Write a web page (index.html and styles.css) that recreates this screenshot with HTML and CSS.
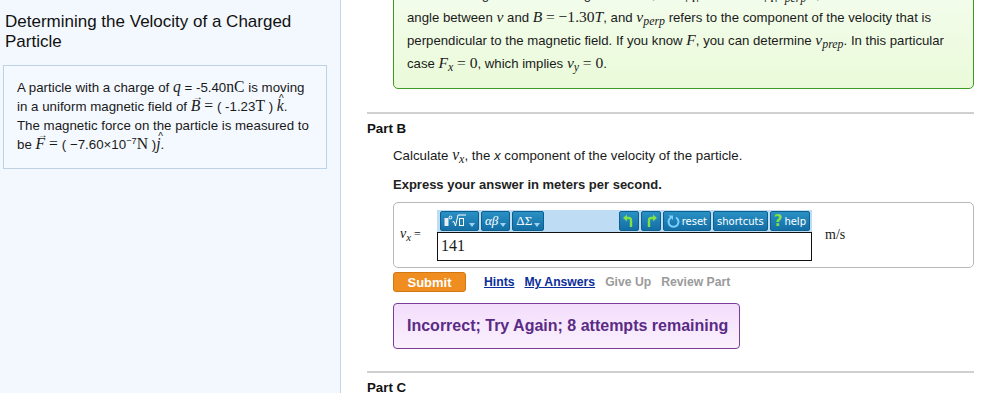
FILE: index.html
```html
<!DOCTYPE html>
<html lang="en">
<head>
    <meta charset="UTF-8">
    <title>Determining the Velocity of a Charged Particle</title>
    <link rel="stylesheet" href="styles.css">
</head>
<body>
    <div class="sidebar">
        <h1 class="problem-title">Determining the Velocity of a Charged Particle</h1>
        <div class="problem-text">
            A particle with a charge of <i class="m">q</i> = -5.40<span class="m">nC</span> is moving<br>
            in a uniform magnetic field of <span class="vec"><i class="m">B</i></span><span class="m"> = </span>( -1.23<span class="m">T</span> ) <span class="hat"><i class="m">k</i></span>.<br>
            The magnetic force on the particle is measured to<br>
            be <span class="vec"><i class="m">F</i></span><span class="m"> = </span>( &minus;7.60&times;10<sup>&minus;7</sup><span class="m">N</span> )<span class="hat"><i class="m">j</i></span>.
        </div>
    </div>

    <div class="main">
        <!-- hint from part A -->
        <div class="hint-box">
            <p>From the magnitude of the magnetic force, <i class="m">F</i> <span class="m">= |</span><i class="m">q</i><span class="m">|</span><i class="m">v</i><i class="m">B</i> sin <i class="m">&theta;</i> <span class="m">= |</span><i class="m">q</i><span class="m">|</span><i class="m">v</i><sub class="m-sub">perp</sub><i class="m">B</i>, where <i class="m">&theta;</i> is the</p>
            <p>angle between <i class="m">v</i> and <i class="m">B</i> <span class="m">= &minus;1.30</span><i class="m">T</i>, and <i class="m">v</i><sub class="m-sub">perp</sub> refers to the component of the velocity that is</p>
            <p>perpendicular to the magnetic field. If you know <i class="m">F</i>, you can determine <i class="m">v</i><sub class="m-sub">prep</sub>. In this particular</p>
            <p>case <i class="m">F</i><sub class="m-sub">x</sub> <span class="m">= 0</span>, which implies <i class="m">v</i><sub class="m-sub">y</sub> <span class="m">= 0</span>.</p>
        </div>

        <div class="part">
            <h2 class="part-title">Part B</h2>
            <div class="part-body">
                <p class="question">Calculate <i class="m">v</i><sub class="m-sub">x</sub>, the <i>x</i> component of the velocity of the particle.</p>
                <p class="units-note">Express your answer in meters per second.</p>

                <div class="answer-box">
                    <div class="answer-label"><i class="m">v</i><sub class="m-sub">x</sub> =</div>
                    <div class="editor">
                        <div class="toolbar">
                            <div class="tool-group">
                                <span class="tool">
                                    <svg width="23" height="14" viewBox="0 0 23 14">
                                        <rect x="0.5" y="4" width="4" height="8" fill="#e8eef4"/>
                                        <circle cx="6.5" cy="3.5" r="1.4" fill="none" stroke="#fff" stroke-width="1"/>
                                        <path d="M8.5 8 L10 7.5 L11.5 12 L14 1 L22 1" fill="none" stroke="#fff" stroke-width="1"/>
                                        <rect x="15.5" y="4.5" width="4" height="7" fill="none" stroke="#fff" stroke-width="1"/>
                                    </svg>
                                    <span class="caret"></span>
                                </span>
                                <span class="tool"><span class="greek">&alpha;&beta;</span><span class="caret"></span></span>
                                <span class="tool"><span class="greek up">&Delta;&Sigma;</span><span class="caret"></span></span>
                            </div>
                            <div class="tool-group">
                                <span class="tool icon">
                                    <svg width="14" height="14" viewBox="0 0 14 14">
                                        <path d="M9 13 L9 6 Q9 4 7 4 L4 4" fill="none" stroke="#7fe04a" stroke-width="2.4"/>
                                        <path d="M1 4 L5 0.5 L5 7.5 Z" fill="#7fe04a"/>
                                    </svg>
                                </span>
                                <span class="tool icon">
                                    <svg width="14" height="14" viewBox="0 0 14 14">
                                        <path d="M5 13 L5 6 Q5 4 7 4 L10 4" fill="none" stroke="#7fe04a" stroke-width="2.4"/>
                                        <path d="M13 4 L9 0.5 L9 7.5 Z" fill="#7fe04a"/>
                                    </svg>
                                </span>
                                <span class="tool">
                                    <svg width="13" height="14" viewBox="0 0 13 14">
                                        <path d="M4 3.5 A5 5 0 1 0 9 3.5" fill="none" stroke="#7fd0ff" stroke-width="2"/>
                                        <path d="M1.5 1.5 L6 1.5 L6 6 Z" fill="#7fd0ff"/>
                                    </svg>
                                    reset
                                </span>
                                <span class="tool">shortcuts</span>
                                <span class="tool"><span class="help-mark">?</span>help</span>
                            </div>
                        </div>
                        <div class="answer-input">141</div>
                    </div>
                    <div class="answer-units">m/s</div>
                </div>

                <div class="actions">
                    <button class="submit-btn">Submit</button>
                    <a class="action-link" href="#">Hints</a>
                    <a class="action-link" href="#">My Answers</a>
                    <span class="action-link off">Give Up</span>
                    <span class="action-link off">Review Part</span>
                </div>

                <div class="feedback">Incorrect; Try Again; 8 attempts remaining</div>
            </div>
        </div>

        <div class="part">
            <h2 class="part-title">Part C</h2>
        </div>
    </div>
</body>
</html>
```

FILE: styles.css
```css
* {
    margin: 0;
    padding: 0;
    box-sizing: border-box;
}

body {
    font-family: "Liberation Sans", Arial, sans-serif;
    color: #1a1a1a;
    background: #fff;
    display: flex;
    height: 393px;
    overflow: hidden;
}

.m {
    font-family: "Liberation Serif", "Times New Roman", serif;
    font-size: 1.18em;
    line-height: 0;
}

i.m {
    font-style: italic;
}

.m-sub {
    font-family: "Liberation Serif", "Times New Roman", serif;
    font-style: italic;
    font-size: 0.9em;
    vertical-align: -3px;
    line-height: 0;
}

sup {
    font-size: 0.7em;
    vertical-align: 5px;
    line-height: 0;
}

/* left column */
.sidebar {
    width: 341px;
    flex-shrink: 0;
    background: #f3f8fe;
    border-right: 1px solid #c2d4e6;
    padding: 12px 0 0 3px;
}

.problem-title {
    font-size: 17px;
    font-weight: normal;
    line-height: 20px;
    color: #111;
    padding-left: 2px;
    margin-bottom: 13px;
}

.problem-text {
    width: 324px;
    border: 1px solid #bfd2e4;
    background: #f4f9ff;
    padding: 12px 6px 14px 13px;
    font-size: 13.3px;
    line-height: 19px;
}

.vec, .hat {
    position: relative;
    display: inline-block;
    line-height: 0;
}

.vec::before, .hat::before {
    position: absolute;
    left: 2px;
    right: 0;
    text-align: center;
    font-size: 10px;
    line-height: 10px;
}

.vec::before {
    content: "\2192";
    top: -14px;
}

.hat::before {
    content: "^";
    top: -12px;
}

/* right column */
.main {
    width: 607px;
    margin-left: 26px;
}

.hint-box {
    margin: -26px 0 0 26px;
    border: 1px solid #3f9a22;
    border-radius: 5px;
    background: linear-gradient(#f5fdf0, #eafad9);
    padding: 8px 10px 13px 13px;
    font-size: 13.2px;
    line-height: 23px;
}

.part {
    border-top: 2px solid #d0d0d0;
    margin-top: 23px;
}

.part-title {
    font-size: 13.3px;
    font-weight: bold;
    line-height: 18px;
    margin-top: 6px;
    color: #111;
}

.part-body {
    padding-left: 26px;
}

.question {
    font-size: 13.3px;
    line-height: 18px;
    margin-top: 9px;
}

.units-note {
    font-size: 13px;
    font-weight: bold;
    line-height: 18px;
    margin-top: 11px;
    color: #222;
}

.answer-box {
    margin-top: 8px;
    height: 66px;
    border: 1px solid #b8b8b8;
    border-radius: 5px;
    display: flex;
    align-items: flex-start;
    padding: 7px 0 0 6px;
}

.answer-label {
    width: 37px;
    padding-top: 17px;
    font-family: "Liberation Serif", serif;
    font-size: 12px;
}

.answer-label i.m {
    font-size: 14px;
}

.editor {
    width: 375px;
}

.toolbar {
    height: 22px;
    background: #bfdcf5;
    display: flex;
    justify-content: space-between;
    align-items: center;
    padding: 0 2px 0 3px;
}

.tool-group {
    display: flex;
    gap: 2px;
}

.tool {
    height: 20px;
    display: flex;
    align-items: center;
    gap: 2px;
    padding: 0 3px;
    background: linear-gradient(#2a90c4, #136fa6);
    border: 1px solid #0d5f8e;
    border-radius: 2px;
    color: #fff;
    font-family: "DejaVu Sans", Verdana, sans-serif;
    font-size: 10px;
}

.tool.icon {
    padding: 0 2px;
}

.greek {
    font-family: "Liberation Serif", serif;
    font-style: italic;
    font-size: 13px;
}

.greek.up {
    font-style: normal;
}

.caret {
    width: 0;
    height: 0;
    border-left: 3px solid transparent;
    border-right: 3px solid transparent;
    border-top: 4px solid #9fd2f5;
    margin-top: 8px;
}

.help-mark {
    color: #7fe04a;
    font-size: 15px;
    font-weight: bold;
    font-family: "DejaVu Sans", sans-serif;
}

.answer-input {
    height: 29px;
    border: 1px solid #111;
    background: #fff;
    font-family: "Liberation Serif", serif;
    font-size: 16px;
    line-height: 25px;
    padding-left: 3px;
}

.answer-units {
    margin-left: 13px;
    padding-top: 17px;
    font-family: "Liberation Serif", serif;
    font-size: 14px;
}

.actions {
    margin-top: 4px;
    display: flex;
    align-items: center;
    height: 20px;
}

.submit-btn {
    width: 73px;
    height: 20px;
    background: #ef8d20;
    border: 1px solid #d27812;
    border-radius: 3px;
    color: #fff;
    font-family: "Liberation Sans", sans-serif;
    font-weight: bold;
    font-size: 13px;
    margin-right: 18px;
}

.action-link {
    font-size: 12.2px;
    font-weight: bold;
    color: #0b2e9a;
    margin-right: 10px;
}

.action-link.off {
    color: #9a9a9a;
}

.feedback {
    margin-top: 11px;
    width: 347px;
    height: 46px;
    border: 1px solid #7a3d98;
    border-radius: 4px;
    background: linear-gradient(#f3ddfb, #fbf1fe);
    color: #5a2b85;
    font-size: 16px;
    font-weight: bold;
    padding: 13px 0 0 13px;
}

.part:last-child {
    margin-top: 22px;
}
```
